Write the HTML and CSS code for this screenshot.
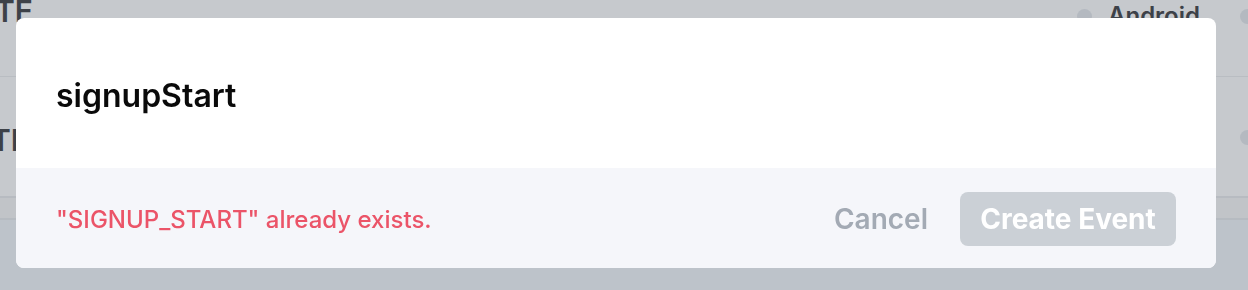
FILE: index.html
```html
<!DOCTYPE html>
<html>
<head>
<meta charset="utf-8">
<link rel="stylesheet" href="styles.css">
</head>
<body>
<div class="page">
  <div class="row row-1">
    <span class="cell-name name-1">TE</span>
    <div class="platforms">
      <span class="dot"></span>
      <span class="platform">Android</span>
      <span class="dot dot-edge"></span>
    </div>
  </div>
  <div class="row row-2">
    <span class="cell-name name-2">TE</span>
    <span class="dot dot-edge"></span>
  </div>
  <div class="band"></div>
  <div class="rest"></div>
</div>

<div class="overlay">
  <div class="modal">
    <div class="modal-body">
      <h2 class="event-name">signupStart</h2>
    </div>
    <div class="modal-footer">
      <p class="error">"SIGNUP_START" already exists.</p>
      <div class="actions">
        <button class="btn-cancel">Cancel</button>
        <button class="btn-create" disabled>Create Event</button>
      </div>
    </div>
  </div>
</div>
</body>
</html>
```
FILE: styles.css
```css
* { box-sizing: border-box; }
html, body {
  margin: 0;
  padding: 0;
  height: 290px;
  overflow: hidden;
  font-family: Inter, "Noto Sans", sans-serif;
}
body { background: #bdc3ca; }

.page {
  display: flex;
  flex-direction: column;
  background: #c6c9cd;
}
.row {
  display: flex;
  justify-content: space-between;
  align-items: flex-start;
  border-bottom: 1px solid #b9bdc2;
  overflow: hidden;
}
.row-1 { height: 77px; }
.row-2 { height: 121px; border-bottom: 2px solid #b7bbc1; }
.cell-name {
  font-size: 30px;
  font-weight: 600;
  color: #3d4148;
  line-height: 1;
}
.name-1 { margin-left: -5px; margin-top: -4px; }
.name-2 { margin-left: -9px; margin-top: 48px; }

.platforms {
  display: flex;
  align-items: flex-start;
}
.dot {
  width: 15px;
  height: 15px;
  border-radius: 50%;
  background: #b4b9c0;
  margin-top: 9px;
}
.platform {
  font-size: 24px;
  font-weight: 600;
  color: #3d4148;
  line-height: 1;
  margin-top: 4px;
  margin-left: 16px;
  margin-right: 40px;
}
.dot-edge { margin-right: -7px; }
.row-2 .dot-edge { margin-top: 53px; }

.band {
  height: 22px;
  background: #c1c4c8;
  border-bottom: 2px solid #b6bbc1;
}
.rest { height: 80px; background: #bdc3ca; }

.overlay {
  position: fixed;
  inset: 0;
  padding: 18px 32px 22px 16px;
  display: flex;
  align-items: flex-start;
}
.modal {
  width: 1200px;
  border-radius: 8px;
  overflow: hidden;
  background: #ffffff;
  display: flex;
  flex-direction: column;
}
.modal-body {
  height: 150px;
  padding: 6px 40px 0;
  display: flex;
  align-items: center;
}
.event-name {
  margin: 0;
  font-size: 32px;
  font-weight: 600;
  color: #0a0a0a;
  line-height: 1.2;
}
.modal-footer {
  height: 100px;
  background: #f5f6fa;
  padding: 2px 40px 0;
  display: flex;
  align-items: center;
  justify-content: space-between;
}
.error {
  margin: 0;
  font-size: 24px;
  font-weight: 500;
  color: #eb5468;
}
.actions {
  display: flex;
  align-items: center;
  gap: 32px;
}
.btn-cancel {
  border: 0;
  background: none;
  padding: 0;
  font-family: inherit;
  font-size: 28px;
  font-weight: 600;
  color: #a3aab4;
}
.btn-create {
  border: 0;
  font-family: inherit;
  font-size: 28px;
  font-weight: 700;
  color: #ffffff;
  background: #cbd0d6;
  border-radius: 8px;
  height: 54px;
  width: 216px;
  padding: 0;
}
```
